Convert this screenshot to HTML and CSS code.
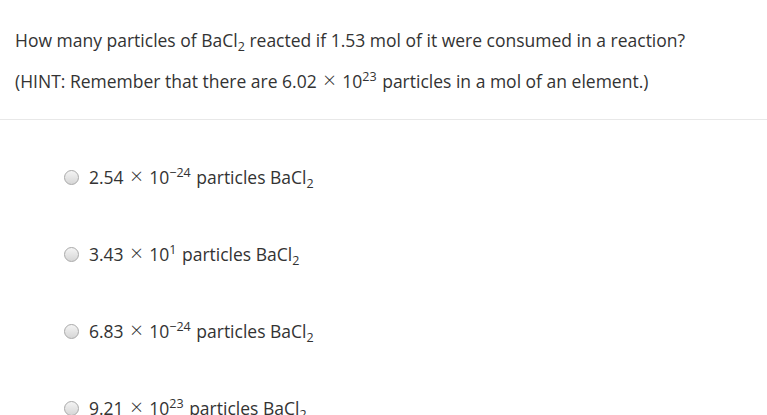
FILE: index.html
```html
<!DOCTYPE html>
<html>
<head>
<meta charset="utf-8">
<link rel="stylesheet" href="styles.css">
</head>
<body>
<div class="question">
  <p class="line">How many particles of BaCl<sub>2</sub> reacted if 1.53 mol of it were consumed in a reaction?</p>
  <p class="line">(HINT: Remember that there are 6.02 <span class="times">&times;</span> 10<sup>23</sup> particles in a mol of an element.)</p>
</div>
<div class="answers">
  <label class="option"><span class="radio"></span><span>2.54 <span class="times">&times;</span> 10<sup>&minus;24</sup> particles BaCl<sub>2</sub></span></label>
  <label class="option"><span class="radio"></span><span>3.43 <span class="times">&times;</span> 10<sup>1</sup> particles BaCl<sub>2</sub></span></label>
  <label class="option"><span class="radio"></span><span>6.83 <span class="times">&times;</span> 10<sup>&minus;24</sup> particles BaCl<sub>2</sub></span></label>
  <label class="option"><span class="radio"></span><span>9.21 <span class="times">&times;</span> 10<sup>23</sup> particles BaCl<sub>2</sub></span></label>
</div>
</body>
</html>
```
FILE: styles.css
```css
html, body {
  margin: 0;
  padding: 0;
  background: #fff;
}
body {
  font-family: "Open Sans", "Liberation Sans", sans-serif;
  font-size: 17.5px;
  color: #333;
  overflow: hidden;
}
.question {
  padding: 28px 0 26px 15px;
  border-bottom: 1px solid #e8e8e8;
}
.line {
  margin: 0;
  line-height: 24px;
}
.line + .line {
  margin-top: 17px;
}
.times {
  font-size: 22px;
  line-height: 0;
  font-weight: 300;
  margin: 0 2px;
}
sub, sup {
  font-size: 12.5px;
  line-height: 0;
  position: relative;
}
sub { vertical-align: baseline; top: 4px; }
sup { vertical-align: baseline; top: -7px; margin-right: 1px; }
.answers {
  display: flex;
  flex-direction: column;
  gap: 53px;
  padding: 45px 0 0 64px;
}
.option {
  display: flex;
  align-items: center;
  gap: 10px;
  line-height: 24px;
}
.radio {
  width: 15px;
  height: 15px;
  border-radius: 50%;
  box-sizing: border-box;
  border: 1px solid #a9a9a9;
  background: linear-gradient(#f4f4f4, #d6d6d6);
  flex: none;
}
```
